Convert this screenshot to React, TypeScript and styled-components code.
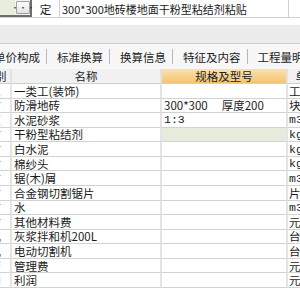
import styled, { createGlobalStyle } from "styled-components";

const GlobalStyle = createGlobalStyle`
  html, body {
    margin: 0;
    padding: 0;
    background: #ffffff;
    overflow: hidden;
  }
  body {
    font-family: "Noto Sans CJK SC", "Noto Sans", sans-serif;
    font-size: 11px;
    color: #1a1a1a;
  }
`;

const Page = styled.div`
  display: flex;
  flex-direction: column;
  width: 340px;
  height: 300px;
  margin-left: -20px;
`;

const TopRow = styled.div`
  display: flex;
  height: 18px;
  border-bottom: 1px solid #d0d0d0;
  box-sizing: border-box;
`;

const ActiveCell = styled.div`
  display: flex;
  align-items: center;
  gap: 1px;
  width: 52px;
  box-sizing: border-box;
  border: 2px solid #6e6e6e;
  border-top: none;
  border-left: none;
  background: #f4f4f4;
`;

const GreenInput = styled.div`
  width: 36px;
  height: 100%;
  background: #e7eedb;
`;

const DotButton = styled.div`
  display: flex;
  align-items: center;
  justify-content: center;
  width: 12px;
  height: 11px;
  border: 1px solid #a0a0a0;
  border-radius: 1px;
  background: linear-gradient(#fdfdfd, #e2e2e2);
  font-size: 8px;
  line-height: 1;
  color: #333;
`;

const TopCell = styled.div<{ $w: number; $center?: boolean }>`
  display: flex;
  align-items: center;
  justify-content: ${(p) => (p.$center ? "center" : "flex-start")};
  width: ${(p) => p.$w}px;
  padding-left: ${(p) => (p.$center ? 0 : 2)}px;
  box-sizing: border-box;
  border-right: 1px solid #d0d0d0;
  white-space: nowrap;
  overflow: hidden;
  font-size: ${(p) => (p.$center ? 11.5 : 11)}px;
`;

const Spacer = styled.div`
  height: 7px;
  background: #ffffff;
`;

const Band = styled.div`
  height: 18px;
  background: #ececec;
  border-bottom: 1px solid #cdcdcd;
`;

const TabBar = styled.div`
  display: flex;
  align-items: center;
  height: 25px;
  background: #f7f7f7;
  margin-left: 14px;
`;

const Tab = styled.div`
  display: flex;
  align-items: center;
  height: 15px;
  padding: 0 6px 0 10px;
  border-right: 1px solid #b8b8b8;
  white-space: nowrap;
  font-size: 11.5px;
  color: #222;

  &:first-child {
    padding-left: 0;
  }
  &:last-child {
    border-right: none;
  }
`;

const Grid = styled.div`
  display: grid;
  grid-template-columns: 32px 150px 126px 40px;
`;

const HeadCell = styled.div<{ $hl?: boolean }>`
  display: flex;
  align-items: center;
  justify-content: center;
  height: 15px;
  box-sizing: border-box;
  border-right: 2px solid #e2e2e2;
  border-bottom: 1px solid #cfcfcf;
  background: ${(p) =>
    p.$hl ? "linear-gradient(#fbe2ad, #f3c46f)" : "#f1f1f1"};
  white-space: nowrap;
  overflow: hidden;
  font-size: 11.5px;
  color: #222;
`;

const Cell = styled.div<{ $center?: boolean; $fill?: string; $mono?: boolean }>`
  display: flex;
  align-items: center;
  justify-content: ${(p) => (p.$center ? "center" : "flex-start")};
  height: 14.57px;
  padding-left: ${(p) => (p.$center ? 0 : 2)}px;
  box-sizing: border-box;
  border-right: 2px solid #e4e4e4;
  border-bottom: 1px solid #d2d2d2;
  background: ${(p) => p.$fill ?? "#ffffff"};
  white-space: pre;
  overflow: hidden;
  font-family: ${(p) =>
    p.$mono
      ? '"Liberation Mono", "Noto Sans CJK SC", monospace'
      : '"Noto Sans CJK SC", sans-serif'};
  font-size: 11.5px;
  color: #1a1a1a;
`;

const UnitCell = styled(Cell)`
  font-family: "Liberation Mono", "Noto Sans CJK SC", monospace;
  padding-left: 1px;
`;

type Item = { kind: string; name: string; spec: string; unit: string; green?: boolean };

const items: Item[] = [
  { kind: "人", name: "一类工(装饰)", spec: "", unit: "工日" },
  { kind: "材", name: "防滑地砖", spec: "300*300\u3000 厚度200", unit: "块" },
  { kind: "浆", name: "水泥砂浆", spec: "1:3", unit: "m3" },
  { kind: "材", name: "干粉型粘结剂", spec: "", unit: "kg", green: true },
  { kind: "材", name: "白水泥", spec: "", unit: "kg" },
  { kind: "材", name: "棉纱头", spec: "", unit: "kg" },
  { kind: "材", name: "锯(木)屑", spec: "", unit: "m3" },
  { kind: "材", name: "合金钢切割锯片", spec: "", unit: "片" },
  { kind: "材", name: "水", spec: "", unit: "m3" },
  { kind: "材", name: "其他材料费", spec: "", unit: "元" },
  { kind: "机", name: "灰浆拌和机200L", spec: "", unit: "台班" },
  { kind: "机", name: "电动切割机", spec: "", unit: "台班" },
  { kind: "管", name: "管理费", spec: "", unit: "元" },
  { kind: "利", name: "利润", spec: "", unit: "元" },
];

const tabs = ["单价构成", "标准换算", "换算信息", "特征及内容", "工程量明细"];

export default function App() {
  return (
    <>
      <GlobalStyle />
      <Page>
        <TopRow>
          <ActiveCell>
            <GreenInput />
            <DotButton>•••</DotButton>
          </ActiveCell>
          <TopCell $w={28} $center>
            定
          </TopCell>
          <TopCell $w={229}>300*300地砖楼地面干粉型粘结剂粘贴</TopCell>
          <TopCell $w={31} />
        </TopRow>
        <Spacer />
        <Band />
        <TabBar>
          {tabs.map((t) => (
            <Tab key={t}>{t}</Tab>
          ))}
        </TabBar>
        <Grid>
          <HeadCell>类别</HeadCell>
          <HeadCell>名称</HeadCell>
          <HeadCell $hl>规格及型号</HeadCell>
          <HeadCell>单位</HeadCell>
          {items.map((it, i) => (
            <Row key={i} item={it} />
          ))}
        </Grid>
      </Page>
    </>
  );
}

function Row({ item }: { item: Item }) {
  return (
    <>
      <Cell $center>{item.kind}</Cell>
      <Cell>{item.name}</Cell>
      <Cell $fill={item.green ? "#e6ecdb" : undefined} $mono={item.spec === "1:3"}>
        {item.spec}
      </Cell>
      <UnitCell>{item.unit}</UnitCell>
    </>
  );
}
